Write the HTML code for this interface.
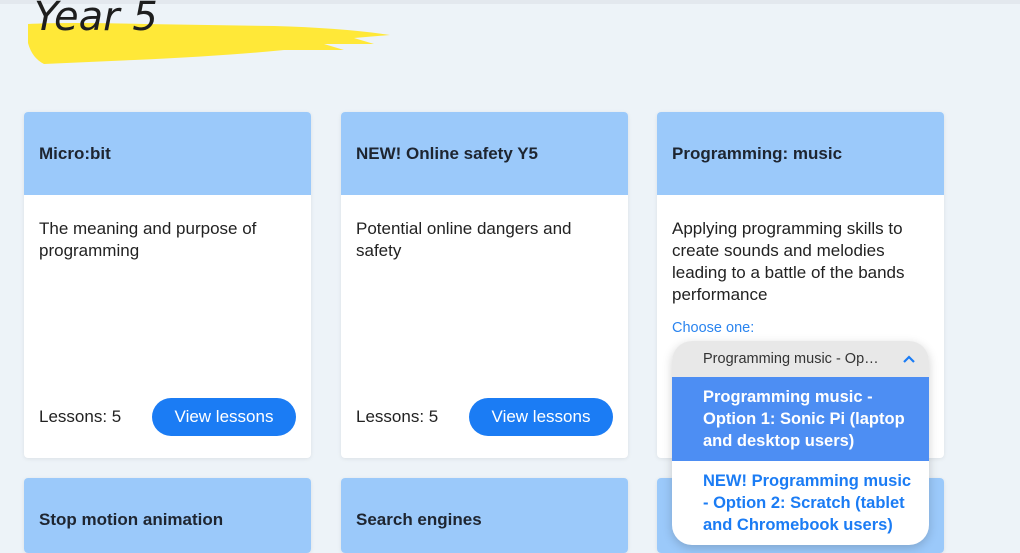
<!DOCTYPE html>
<html><head><meta charset="utf-8"><style>
*{box-sizing:border-box;margin:0;padding:0}
html,body{width:1020px;height:553px;overflow:hidden}
body{background:#edf3f8;font-family:"Liberation Sans",sans-serif;color:#222;position:relative}
.top{position:absolute;left:0;top:0;width:1020px;height:4px;background:#e3e8ee}
.title{position:absolute;left:34px;top:-6px;font-family:"Comic Sans MS","DejaVu Sans",cursive;font-size:40px;font-style:italic;color:#1e1e1e;letter-spacing:0;z-index:2}
.card{position:absolute;width:287px;height:346px;background:#fff;border-radius:4px;box-shadow:0 1px 4px rgba(0,0,0,.08);overflow:hidden}
.card .h{height:83px;background:#9bc9fa;padding:0 15px;display:flex;align-items:center;font-weight:bold;font-size:17px;color:#1e2530}
.card .b{padding:23px 0 0 15px;width:262px;font-size:17px;line-height:22px;color:#222}
.foot{position:absolute;left:15px;right:15px;top:286px;height:38px;display:flex;align-items:center;justify-content:space-between;font-size:17px}
.btn{background:#1b7cf4;color:#fff;border-radius:19px;width:144px;height:38px;display:flex;align-items:center;justify-content:center;font-size:17px}
.choose{color:#2a84ef;font-size:14.5px;margin-top:11px}
.dd{position:absolute;left:672px;top:341px;width:257px;height:204px;border-radius:20px;background:#fff;box-shadow:0 3px 10px rgba(0,0,0,.18);overflow:hidden;z-index:5}
.dd .sel{height:36px;background:#e8e8e8;font-size:14.5px;color:#333;padding-left:31px;display:flex;align-items:center;position:relative}
.dd .sel svg{position:absolute;right:14px;top:14px}
.opt{height:84px;padding:9px 10px 0 31px;font-weight:bold;font-size:16.5px;line-height:22px}
.o1{background:#4d8ef3;color:#fff}.o2{color:#1b7cf4}
</style></head><body>
<div class="top"></div>
<svg style="position:absolute;left:24px;top:18px" width="370" height="50" viewBox="0 0 370 50"><path d="M4 6 Q40 4 120 6 L250 8 Q320 10 366 17 L330 20 L350 26 L300 26 L320 32 L260 32 Q200 38 110 42 L20 46 Q8 40 4 25 Z" fill="#ffe838"/></svg>
<div class="title">Year 5</div>

<div class="card" style="left:24px;top:112px"><div class="h">Micro:bit</div><div class="b">The meaning and purpose of programming</div><div class="foot"><span>Lessons: 5</span><span class="btn">View lessons</span></div></div>
<div class="card" style="left:341px;top:112px"><div class="h">NEW! Online safety Y5</div><div class="b">Potential online dangers and safety</div><div class="foot"><span>Lessons: 5</span><span class="btn">View lessons</span></div></div>
<div class="card" style="left:657px;top:112px"><div class="h">Programming: music</div><div class="b">Applying programming skills to create sounds and melodies leading to a battle of the bands performance<div class="choose">Choose one:</div></div></div>

<div class="card" style="left:24px;top:478px;height:75px"><div class="h">Stop motion animation</div></div>
<div class="card" style="left:341px;top:478px;height:75px"><div class="h">Search engines</div></div>
<div class="card" style="left:657px;top:478px;height:75px"><div class="h"></div></div>

<div class="dd"><div class="sel">Programming music - Op…<svg width="12" height="8" viewBox="0 0 12 8"><path d="M1 7 L6 2 L11 7" stroke="#1b7cf4" stroke-width="2.2" fill="none"/></svg></div>
<div class="opt o1">Programming music - Option 1: Sonic Pi (laptop and desktop users)</div>
<div class="opt o2">NEW! Programming music - Option 2: Scratch (tablet and Chromebook users)</div></div>
</body></html>
